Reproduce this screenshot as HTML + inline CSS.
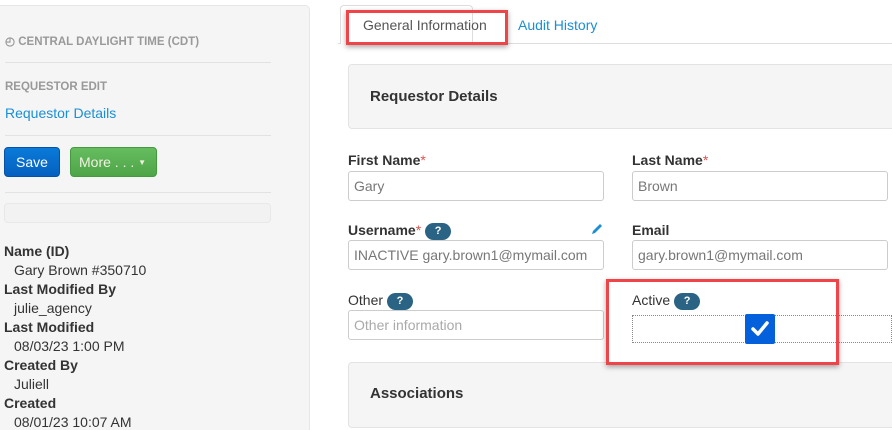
<!DOCTYPE html>
<html style="overflow:hidden;height:430px"><head><style>
body{margin:0;width:892px;height:430px;overflow:hidden;background:#fff;font-family:"Liberation Sans",Arial,sans-serif;position:relative;color:#333}
.a{position:absolute;white-space:nowrap}
.left{position:absolute;left:-5px;top:5px;width:313px;height:430px;background:#f5f5f5;border:1px solid #e6e6e6;border-radius:5px}
.hr{position:absolute;left:5px;width:266px;height:1px;background:#e2e2e2}
.cap{font-size:11.5px;font-weight:bold;color:#999}
.lbl{font-size:14px;font-weight:bold;color:#333}
.val{font-size:14px;color:#333}
.inp{position:absolute;border:1px solid #ccc;border-radius:3px;font-size:14px;color:#777;line-height:28px;padding-left:5px;box-sizing:border-box;height:30px}
.q{display:inline-block;background:#2b6384;color:#fff;font-size:11px;font-weight:bold;border-radius:9px;width:26px;height:17px;line-height:17px;text-align:center;vertical-align:1px;margin-left:4px}
.star{color:#d9534f;font-weight:normal}
.panel{position:absolute;left:348px;width:560px;background:#f5f5f5;border:1px solid #e3e3e3;border-radius:4px;box-sizing:border-box}
.red{position:absolute;border:3px solid #f04548;box-shadow:0 2px 5px rgba(0,0,0,.35);box-sizing:border-box}
</style></head><body>
<div class="left"></div>
<div class="a cap" style="left:5px;top:34px">&#9716; CENTRAL DAYLIGHT TIME (CDT)</div>
<div class="hr" style="top:62px"></div>
<div class="a cap" style="left:5px;top:81px">REQUESTOR EDIT</div>
<div class="a" style="left:5px;top:105px;font-size:14px;color:#1a8fd6">Requestor Details</div>
<div class="hr" style="top:135px"></div>
<div class="a" style="left:4px;top:147px;width:56px;height:30px;background:linear-gradient(#0a7ad8,#0560c0);border:1px solid #0552a8;border-radius:4px;box-sizing:border-box;color:#fff;font-size:14px;line-height:28px;text-align:center">Save</div>
<div class="a" style="left:70px;top:147px;width:87px;height:30px;background:linear-gradient(#66bd5f,#4ea548);border:1px solid #459a40;border-radius:4px;box-sizing:border-box;color:#f0f0e0;font-size:14px;line-height:28px;padding-left:8px">More . . . <span style="font-size:8px;vertical-align:2px">&#9660;</span></div>
<div class="hr" style="top:192px"></div>
<div class="a" style="left:4px;top:203px;width:267px;height:20px;background:#f2f2f2;border:1px solid #e8e8e8;border-radius:4px;box-sizing:border-box"></div>
<div class="a lbl" style="left:4px;top:243px">Name (ID)</div>
<div class="a val" style="left:14px;top:262px">Gary Brown #350710</div>
<div class="a lbl" style="left:4px;top:281px">Last Modified By</div>
<div class="a val" style="left:14px;top:300px">julie_agency</div>
<div class="a lbl" style="left:4px;top:319px">Last Modified</div>
<div class="a val" style="left:14px;top:338px">08/03/23 1:00 PM</div>
<div class="a lbl" style="left:4px;top:357px">Created By</div>
<div class="a val" style="left:14px;top:376px">Juliell</div>
<div class="a lbl" style="left:4px;top:395px">Created</div>
<div class="a val" style="left:14px;top:414px">08/01/23 10:07 AM</div>

<div class="a" style="left:338px;top:43px;width:560px;height:1px;background:#ddd"></div>
<div class="a" style="left:340px;top:5px;width:133px;height:39px;background:#fff;border:1px solid #ddd;border-bottom:none;border-radius:4px 4px 0 0;box-sizing:border-box"></div>
<div class="a" style="left:363px;top:17px;font-size:14px;color:#555">General Information</div>
<div class="a" style="left:518px;top:17px;font-size:14px;color:#1a8fd6">Audit History</div>
<div class="red" style="left:346px;top:10px;width:162px;height:35px"></div>

<div class="panel" style="top:64px;height:65px"></div>
<div class="a" style="left:370px;top:88px;font-size:15px;font-weight:bold">Requestor Details</div>

<div class="panel" style="top:362px;height:66px"></div>
<div class="a" style="left:370px;top:385px;font-size:15px;font-weight:bold">Associations</div>

<div class="a lbl" style="left:348px;top:152px">First Name<span class="star">*</span></div>
<div class="inp" style="left:348px;top:171px;width:256px">Gary</div>
<div class="a lbl" style="left:632px;top:152px">Last Name<span class="star">*</span></div>
<div class="inp" style="left:632px;top:171px;width:256px">Brown</div>

<div class="a lbl" style="left:348px;top:222px">Username<span class="star">*</span><span class="q">?</span></div>
<svg class="a" style="left:590px;top:222px" width="14" height="14" viewBox="0 0 14 14"><path d="M2 12 L3 9 L10 2 L12 4 L5 11 Z" fill="#1a8fd6"/></svg>
<div class="inp" style="left:348px;top:240px;width:256px">INACTIVE gary.brown1@mymail.com</div>
<div class="a lbl" style="left:632px;top:222px">Email</div>
<div class="inp" style="left:632px;top:240px;width:256px">gary.brown1@mymail.com</div>

<div class="a val" style="left:348px;top:292px">Other<span class="q">?</span></div>
<div class="inp" style="left:348px;top:310px;width:256px;color:#aaa">Other information</div>
<div class="a val" style="left:632px;top:292px">Active<span class="q">?</span></div>
<div class="a" style="left:632px;top:315px;width:260px;height:28px;border:1px dotted #888;box-sizing:border-box"></div>
<div class="a" style="left:745px;top:314px;width:30px;height:30px;background:#0560dc;border-radius:2px"><svg width="30" height="30" viewBox="0 0 30 30"><path d="M8 15 L13 20 L22 9" stroke="#fff" stroke-width="3.5" fill="none" stroke-linecap="round" stroke-linejoin="round"/></svg></div>
<div class="red" style="left:606px;top:279px;width:233px;height:86px;background:transparent"></div>
</body></html>
